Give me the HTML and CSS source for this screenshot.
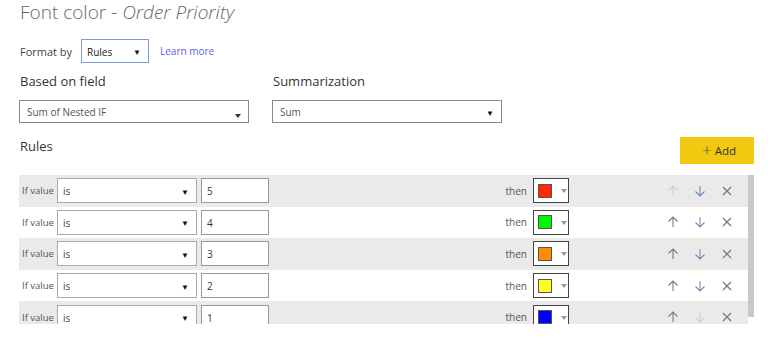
FILE: index.html
```html
<!DOCTYPE html>
<html>
<head>
    <meta charset="UTF-8">
    <meta name="viewport" content="width=device-width, initial-scale=1.0">
    <title>Font color - Order Priority</title>
    <link rel="stylesheet" href="styles.css">
</head>
<body>
    <h1 class="title">Font color - <em>Order Priority</em></h1>

    <div class="format-by">
        <span class="format-label">Format by</span>
        <div class="select select-small"><span>Rules</span><span class="tri">&#9660;</span></div>
        <a class="learn" href="#">Learn more</a>
    </div>

    <div class="fields">
        <div class="field field-left">
            <div class="field-label">Based on field</div>
            <div class="select select-wide"><span>Sum of Nested IF</span><span class="caret"></span></div>
        </div>
        <div class="field">
            <div class="field-label">Summarization</div>
            <div class="select select-wide"><span>Sum</span><span class="tri">&#9660;</span></div>
        </div>
    </div>

    <div class="rules-head">
        <div class="field-label">Rules</div>
        <button class="add-btn"><span class="plus">+</span>Add</button>
    </div>

    <div class="rules">
        <div class="rule-list">
            <div class="rule shade">
                <span class="if">If value</span>
                <div class="select rule-select"><span class="is">is</span><span class="tri">&#9660;</span></div>
                <div class="num-wrap"><div class="num">5</div></div>
                <span class="then">then</span>
                <div class="swatch-box"><span class="swatch red"></span><span class="caret"></span></div>
                <span></span>
                <svg class="icon off" viewBox="0 0 12 12"><path d="M6 11V1M1.5 5.5L6 1l4.5 4.5"/></svg>
                <svg class="icon down" viewBox="0 0 12 12"><path d="M6 1v10M1.5 6.5L6 11l4.5-4.5"/></svg>
                <svg class="icon close" viewBox="0 0 12 12"><path d="M2 2l8 8M10 2l-8 8"/></svg>
            </div>
            <div class="rule">
                <span class="if">If value</span>
                <div class="select rule-select"><span class="is">is</span><span class="tri">&#9660;</span></div>
                <div class="num-wrap"><div class="num">4</div></div>
                <span class="then">then</span>
                <div class="swatch-box"><span class="swatch green"></span><span class="caret"></span></div>
                <span></span>
                <svg class="icon" viewBox="0 0 12 12"><path d="M6 11V1M1.5 5.5L6 1l4.5 4.5"/></svg>
                <svg class="icon down" viewBox="0 0 12 12"><path d="M6 1v10M1.5 6.5L6 11l4.5-4.5"/></svg>
                <svg class="icon close" viewBox="0 0 12 12"><path d="M2 2l8 8M10 2l-8 8"/></svg>
            </div>
            <div class="rule shade">
                <span class="if">If value</span>
                <div class="select rule-select"><span class="is">is</span><span class="tri">&#9660;</span></div>
                <div class="num-wrap"><div class="num">3</div></div>
                <span class="then">then</span>
                <div class="swatch-box"><span class="swatch orange"></span><span class="caret"></span></div>
                <span></span>
                <svg class="icon" viewBox="0 0 12 12"><path d="M6 11V1M1.5 5.5L6 1l4.5 4.5"/></svg>
                <svg class="icon down" viewBox="0 0 12 12"><path d="M6 1v10M1.5 6.5L6 11l4.5-4.5"/></svg>
                <svg class="icon close" viewBox="0 0 12 12"><path d="M2 2l8 8M10 2l-8 8"/></svg>
            </div>
            <div class="rule">
                <span class="if">If value</span>
                <div class="select rule-select"><span class="is">is</span><span class="tri">&#9660;</span></div>
                <div class="num-wrap"><div class="num">2</div></div>
                <span class="then">then</span>
                <div class="swatch-box"><span class="swatch yellow"></span><span class="caret"></span></div>
                <span></span>
                <svg class="icon" viewBox="0 0 12 12"><path d="M6 11V1M1.5 5.5L6 1l4.5 4.5"/></svg>
                <svg class="icon down" viewBox="0 0 12 12"><path d="M6 1v10M1.5 6.5L6 11l4.5-4.5"/></svg>
                <svg class="icon close" viewBox="0 0 12 12"><path d="M2 2l8 8M10 2l-8 8"/></svg>
            </div>
            <div class="rule shade">
                <span class="if">If value</span>
                <div class="select rule-select"><span class="is">is</span><span class="tri">&#9660;</span></div>
                <div class="num-wrap"><div class="num">1</div></div>
                <span class="then">then</span>
                <div class="swatch-box"><span class="swatch blue"></span><span class="caret"></span></div>
                <span></span>
                <svg class="icon" viewBox="0 0 12 12"><path d="M6 11V1M1.5 5.5L6 1l4.5 4.5"/></svg>
                <svg class="icon down off" viewBox="0 0 12 12"><path d="M6 1v10M1.5 6.5L6 11l4.5-4.5"/></svg>
                <svg class="icon close" viewBox="0 0 12 12"><path d="M2 2l8 8M10 2l-8 8"/></svg>
            </div>
        </div>
        <div class="scrollbar"><div class="thumb"></div></div>
    </div>
</body>
</html>
```

FILE: styles.css
```css
body {
    margin: 0;
    padding: 0 14px 0 19px;
    font-family: "Open Sans", "Noto Sans", sans-serif;
    color: #333;
    background: #fff;
}
.title {
    margin: 0;
    padding-left: 1px;
    height: 26px;
    line-height: 24px;
    font-size: 19px;
    font-weight: 300;
    color: #666;
}
.title em { font-style: italic; }

.format-by {
    display: flex;
    align-items: center;
    margin-top: 13px;
    height: 24px;
}
.format-label {
    font-size: 11px;
    width: 61px;
    padding-left: 1px;
    color: #444;
}
.select {
    display: flex;
    align-items: center;
    justify-content: space-between;
    box-sizing: border-box;
    background: #fff;
    border: 1px solid #8a8a8a;
    font-size: 10px;
    color: #555;
}
.select-small {
    width: 68px;
    height: 24px;
    border-color: #7d9bd4;
    padding: 1px 7px 0 5px;
    color: #222;
}
.tri { font-size: 8px; color: #111; }
.learn {
    margin-left: 11px;
    font-size: 10px;
    color: #5c5cf0;
    text-decoration: none;
}

.fields {
    display: flex;
    margin-top: 8px;
}
.field-left { width: 253px; }
.field-label {
    font-size: 13px;
    color: #333;
    height: 20px;
    line-height: 20px;
    padding-left: 1px;
}
.select-wide {
    margin-top: 9px;
    width: 230px;
    height: 23px;
    padding: 1px 7px 0 7px;
}
.caret {
    width: 0;
    height: 0;
    border-left: 3.5px solid transparent;
    border-right: 3.5px solid transparent;
    border-top: 4px solid #333;
    margin-top: 7px;
}

.rules-head {
    display: flex;
    justify-content: space-between;
    align-items: flex-start;
    margin-top: 14px;
    height: 38px;
}
.rules-head .field-label { margin-top: -1px; }
.add-btn {
    display: flex;
    align-items: center;
    justify-content: center;
    gap: 3px;
    width: 74px;
    height: 27px;
    border: none;
    background: #f2c811;
    font-family: inherit;
    font-size: 11.5px;
    color: #333;
    padding: 0 0 0 4px;
}
.plus { font-weight: 300; font-size: 17px; line-height: 17px; margin-top: -2px; color: #555; }

.rules {
    display: flex;
    height: 149px;
    overflow: hidden;
}
.rule-list { width: 729px; }
.scrollbar { width: 6px; }
.thumb { height: 142px; background: #c8c8c8; }

.rule {
    display: grid;
    grid-template-columns: 38px 140px 72px 264px 36px 90px 27px 27px 27px;
    align-items: center;
    height: 31.6px;
}
.rule.shade { background: #eaeaea; }
.if {
    font-size: 9.5px;
    color: #555;
    padding-left: 3px;
}
.rule-select {
    height: 25px;
    border-color: #aaa;
    padding: 1px 7px 0 5px;
}
.is { color: #6a2c5c; font-size: 10px; }
.num-wrap { display: flex; justify-content: flex-end; }
.num {
    box-sizing: border-box;
    width: 68px;
    height: 25px;
    border: 1px solid #999;
    background: #fff;
    font-size: 10px;
    padding: 5px 0 0 5px;
    color: #333;
}
.then {
    text-align: right;
    padding-right: 6px;
    font-size: 10px;
    color: #555;
}
.swatch-box {
    box-sizing: border-box;
    height: 25px;
    border: 1px solid #444;
    background: #fff;
    display: flex;
    align-items: center;
    padding-left: 4px;
}
.swatch-box .caret {
    margin: 1px 0 0 9px;
    border-top-color: #999;
}
.swatch {
    box-sizing: border-box;
    width: 14px;
    height: 14px;
    border: 1px solid #555;
}
.red { background: #fd2b00; }
.green { background: #00f600; }
.orange { background: #ff8c00; }
.yellow { background: #ffff21; }
.blue { background: #0000ff; }

.icon {
    justify-self: center;
    width: 12px;
    height: 12px;
    fill: none;
    stroke: #7a7a7a;
    stroke-width: 1.1;
}
.icon.down { stroke: #6f8cb5; }
.icon.close { stroke: #6e7480; }
.icon.off { stroke: #cfcfcf; }
```
